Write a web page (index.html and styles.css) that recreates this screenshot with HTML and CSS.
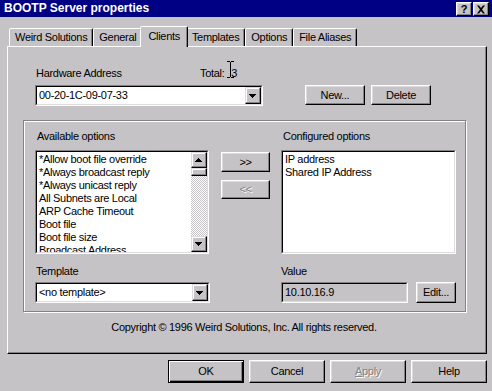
FILE: index.html
```html
<!DOCTYPE html>
<html>
<head>
<meta charset="utf-8">
<title>BOOTP Server properties</title>
<link rel="stylesheet" href="styles.css">
</head>
<body>
<div class="titlebar">
  <span class="title">BOOTP Server properties</span>
  <div class="caption-btns">
    <span class="cbtn cbtn-help">?</span>
    <span class="cbtn"><svg width="10" height="9" viewBox="0 0 10 9"><path d="M1 0.5h2l2 2.5 2-2.5h2L6 4.5 9 8.5H7L5 6 3 8.5H1L4 4.5z" fill="#000"/></svg></span>
  </div>
</div>
<div class="content">
  <div class="tabs">
    <div class="tab">Weird Solutions</div>
    <div class="tab">General</div>
    <div class="tab tab-active">Clients</div>
    <div class="tab">Templates</div>
    <div class="tab">Options</div>
    <div class="tab">File Aliases</div>
  </div>
  <div class="panel">
    <div class="hw-labels">
      <span class="hw-label">Hardware Address</span>
      <span class="total">Total: 3<svg class="ibeam" width="7" height="17" viewBox="0 0 7 17"><path d="M0 0.5h3M4 0.5h3M3.5 1v15M0 16.5h3M4 16.5h3" stroke="#000" stroke-width="1" fill="none"/></svg></span>
    </div>
    <div class="hw-row">
      <div class="sunken combo combo-hw">
        <div class="in">
          <span class="field-text">00-20-1C-09-07-33</span>
          <span class="drop"><svg width="14" height="15" viewBox="0 0 14 15"><path d="M3 6h7v1H9v1H8v1H7v1H6V9H5V8H4V7H3z" fill="#000"/></svg></span>
        </div>
      </div>
      <div class="btn btn-new">New...</div>
      <div class="btn btn-del">Delete</div>
    </div>
    <div class="group">
      <div class="glabels">
        <span class="lbl-avail">Available options</span>
        <span>Configured options</span>
      </div>
      <div class="glists">
        <div class="sunken list list-avail">
          <div class="in">
            <div class="items">
              <div>*Allow boot file override</div>
              <div>*Always broadcast reply</div>
              <div>*Always unicast reply</div>
              <div>All Subnets are Local</div>
              <div>ARP Cache Timeout</div>
              <div>Boot file</div>
              <div>Boot file size</div>
              <div>Broadcast Address</div>
            </div>
            <div class="scroll">
              <span class="sbtn"><svg width="14" height="14" viewBox="0 0 14 14"><path d="M6 5h1v1h1v1h1v1h1v1H3V8h1V7h1V6h1z" fill="#000"/></svg></span>
              <span class="thumb"></span>
              <span class="track"></span>
              <span class="sbtn"><svg width="14" height="14" viewBox="0 0 14 14"><path d="M3 5h7v1H9v1H8v1H7v1H6V8H5V7H4V6H3z" fill="#000"/></svg></span>
            </div>
          </div>
        </div>
        <div class="mid">
          <div class="btn btn-add">&gt;&gt;</div>
          <div class="btn btn-rem disabled">&lt;&lt;</div>
        </div>
        <div class="sunken list list-conf">
          <div class="in">
            <div class="items">
              <div>IP address</div>
              <div>Shared IP Address</div>
            </div>
          </div>
        </div>
      </div>
      <div class="glabels2">
        <span class="lbl-tpl">Template</span>
        <span>Value</span>
      </div>
      <div class="grow2">
        <div class="sunken combo combo-tpl">
          <div class="in">
            <span class="field-text">&lt;no template&gt;</span>
            <span class="drop"><svg width="14" height="15" viewBox="0 0 14 15"><path d="M3 6h7v1H9v1H8v1H7v1H6V9H5V8H4V7H3z" fill="#000"/></svg></span>
          </div>
        </div>
        <div class="sunken value">
          <div class="in"><span class="field-text">10.10.16.9</span></div>
        </div>
        <div class="btn btn-edit">Edit...</div>
      </div>
    </div>
    <div class="copyright">Copyright © 1996 Weird Solutions, Inc. All rights reserved.</div>
  </div>
  <div class="footer">
    <div class="btn btn-foot btn-default">OK</div>
    <div class="btn btn-foot">Cancel</div>
    <div class="btn btn-foot disabled"><span><u>A</u>pply</span></div>
    <div class="btn btn-foot">Help</div>
  </div>
</div>
</body>
</html>
```

FILE: styles.css
```css
* { box-sizing: border-box; }
html, body { margin: 0; padding: 0; }
body {
  width: 492px;
  height: 391px;
  overflow: hidden;
  background: #c6c3c6;
  font-family: "Liberation Sans", Arial, sans-serif;
  font-size: 11px;
  line-height: 13px;
  letter-spacing: -0.3px;
  color: #000;
}

/* title bar */
.titlebar {
  height: 17px;
  background: #000084;
  display: flex;
  justify-content: space-between;
  align-items: flex-start;
}
.title {
  color: #fff;
  font-weight: bold;
  font-size: 12px;
  line-height: 17px;
  letter-spacing: 0;
  padding-left: 4px;
}
.caption-btns {
  display: flex;
  gap: 1px;
  margin-top: 2px;
  margin-right: 3px;
}
.cbtn {
  width: 16px;
  height: 14px;
  background: #c6c3c6;
  border: 1px solid;
  border-color: #fff #000 #000 #fff;
  box-shadow: inset -1px -1px #848284, inset 1px 1px #dedbde;
  display: flex;
  align-items: center;
  justify-content: center;
}
.cbtn-help {
  font-weight: bold;
  font-size: 11px;
  line-height: 11px;
  letter-spacing: 0;
}

/* body */
.content { padding: 0 5px 0 7px; }

.tabs {
  display: flex;
  align-items: flex-end;
  height: 20px;
  margin-top: 9px;
  padding-left: 2px;
}
.tab {
  height: 18px;
  padding: 2px 5px 0;
  border: 1px solid;
  border-bottom: none;
  border-color: #fff #000 transparent #fff;
  border-radius: 2px 2px 0 0;
  box-shadow: inset -1px 0 #848284;
  white-space: nowrap;
  background: #c6c3c6;
}
.tab-active {
  height: 21px;
  padding: 3px 7px 0;
  margin: 0 -2px -1px;
  position: relative;
  z-index: 1;
}

.panel {
  width: 480px;
  height: 308px;
  border: 1px solid;
  border-color: #fff #000 #000 #fff;
  box-shadow: inset -1px -1px #848284;
}

.hw-labels {
  display: flex;
  margin-top: 20px;
  padding-left: 28px;
  height: 13px;
}
.hw-label { width: 164px; }
.total { position: relative; word-spacing: 4px; }
.ibeam { position: absolute; left: 27px; top: -6px; }

.hw-row {
  display: flex;
  margin-top: 5px;
  padding-left: 27px;
}

/* sunken fields */
.sunken {
  border: 1px solid;
  border-color: #848284 #fff #fff #848284;
}
.sunken > .in {
  height: 100%;
  border: 1px solid;
  border-color: #000 #dedbde #dedbde #000;
  background: #fff;
  display: flex;
}
.combo { height: 21px; }
.combo > .in, .value > .in { align-items: center; }
.combo-hw { width: 228px; }
.field-text {
  flex: 1;
  padding-left: 2px;
  white-space: nowrap;
}
.drop {
  width: 16px;
  height: 17px;
  align-self: stretch;
  background: #c6c3c6;
  border: 1px solid;
  border-color: #dedbde #000 #000 #dedbde;
  box-shadow: inset -1px -1px #848284, inset 1px 1px #fff;
  display: flex;
  align-items: center;
  justify-content: center;
}

/* buttons */
.btn {
  background: #c6c3c6;
  border: 1px solid;
  border-color: #fff #000 #000 #fff;
  box-shadow: inset -1px -1px #848284, inset 1px 1px #dedbde;
  display: flex;
  align-items: center;
  justify-content: center;
  white-space: nowrap;
}
.btn-new { width: 60px; height: 20px; margin-left: 42px; }
.btn-del { width: 60px; height: 20px; margin-left: 6px; }
.disabled {
  color: #848284;
  text-shadow: 1px 1px 0 #fff;
}

/* group box */
.group {
  width: 443px;
  height: 192px;
  margin: 14px 0 0 15px;
  border: 1px solid #848284;
  box-shadow: inset 1px 1px #fff, 1px 1px #fff;
}
.glabels {
  display: flex;
  margin-top: 9px;
  padding-left: 13px;
  height: 13px;
}
.lbl-avail { width: 246px; }
.glists {
  display: flex;
  margin-top: 7px;
  padding-left: 11px;
}
.list { height: 104px; }
.list-avail { width: 174px; }
.list-conf { width: 175px; margin-left: 11px; }
.items {
  flex: 1;
  overflow: hidden;
  padding: 1px 2px 0;
  white-space: nowrap;
}
.scroll {
  width: 16px;
  display: flex;
  flex-direction: column;
}
.sbtn {
  width: 16px;
  height: 16px;
  background: #c6c3c6;
  border: 1px solid;
  border-color: #dedbde #000 #000 #dedbde;
  box-shadow: inset -1px -1px #848284, inset 1px 1px #fff;
  display: flex;
  align-items: center;
  justify-content: center;
}
.thumb {
  height: 8px;
  background: #c6c3c6;
  border: 1px solid;
  border-color: #dedbde #000 #000 #dedbde;
  box-shadow: inset -1px -1px #848284, inset 1px 1px #fff;
}
.track {
  flex: 1;
  background: repeating-conic-gradient(#c6c3c6 0 25%, #fff 0 50%) 0 0 / 2px 2px;
}
.mid {
  width: 49px;
  margin-left: 12px;
  display: flex;
  flex-direction: column;
}
.btn-add { height: 20px; margin-top: 2px; }
.btn-rem { height: 19px; margin-top: 8px; }

.glabels2 {
  display: flex;
  margin-top: 11px;
  padding-left: 12px;
  height: 13px;
}
.lbl-tpl { width: 245px; }
.grow2 {
  display: flex;
  margin-top: 4px;
  padding-left: 11px;
}
.combo-tpl { width: 175px; }
.value { width: 127px; height: 21px; margin-left: 71px; }
.value > .in { background: #c6c3c6; }
.btn-edit { width: 40px; height: 21px; margin-left: 8px; }

.copyright {
  margin-top: 9px;
  text-align: center;
  padding-right: 6px;
}

/* footer */
.footer {
  display: flex;
  justify-content: flex-end;
  gap: 5px;
  margin-top: 6px;
}
.btn-foot { width: 76px; height: 23px; }
.btn-default {
  border: 1px solid #000;
  box-shadow: inset 1px 1px #fff, inset -1px -1px #000, inset -2px -2px #848284;
}
```
